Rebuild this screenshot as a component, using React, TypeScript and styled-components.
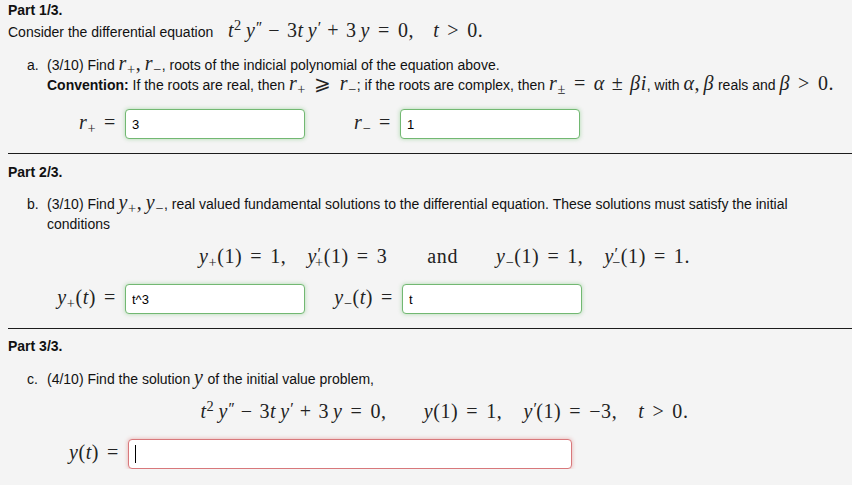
import React from 'react';
import styled, { createGlobalStyle } from 'styled-components';

const Global = createGlobalStyle`
  html, body { margin: 0; padding: 0; background: #f4f4f4; }
  body {
    font-family: "Liberation Sans", Arial, Helvetica, sans-serif;
    font-size: 14px;
    color: #111;
  }
`;

const Page = styled.div`
  padding: 0 0 0 8px;
  line-height: 20px;
`;

const PartTitle = styled.div<{ $mt?: number }>`
  font-weight: bold;
  margin-top: ${(p) => p.$mt ?? 0}px;
`;

const Line = styled.div<{ $mt?: number }>`
  margin-top: ${(p) => p.$mt ?? 0}px;
  white-space: nowrap;
`;

const Rule = styled.div<{ $mt: number }>`
  margin-top: ${(p) => p.$mt}px;
  border-top: 1px solid #1c1c1c;
`;

const Item = styled.div<{ $mt: number }>`
  display: grid;
  grid-template-columns: 20px 1fr;
  padding-left: 19px;
  margin-top: ${(p) => p.$mt}px;
`;

const Marker = styled.span``;

const Body = styled.div`
  padding-right: 10px;
`;

const Bold = styled.b``;

const M = styled.span`
  font-family: "Liberation Serif", "DejaVu Serif", "Times New Roman", serif;
  font-size: 20px;
  letter-spacing: 0.03em;
  line-height: 0;
  color: #222;
  white-space: nowrap;
`;

const I = styled.span`
  font-style: italic;
`;

const Sub = styled.span<{ $under?: boolean }>`
  font-size: 0.72em;
  vertical-align: -0.3em;
  line-height: 0;
  margin-left: ${(p) => (p.$under ? '-0.36em' : '0')};
`;

const Sup = styled.span`
  font-size: 0.72em;
  vertical-align: 0.5em;
  line-height: 0;
`;

const Prime = styled.span`
  font-size: 0.8em;
  vertical-align: 0.28em;
  line-height: 0;
  letter-spacing: -0.05em;
  margin-left: 0.04em;
`;

const Rel = styled.span`
  padding: 0 0.4em;
`;

const Bin = styled.span`
  padding: 0 0.34em;
`;

const Sp = styled.span<{ $em: number }>`
  display: inline-block;
  width: ${(p) => p.$em}em;
`;

const Display = styled.div<{ $mt: number }>`
  margin-top: ${(p) => p.$mt}px;
  text-align: center;
`;

const FieldRow = styled.div<{ $mt: number }>`
  display: flex;
  align-items: center;
  margin-top: ${(p) => p.$mt}px;
`;

const Label = styled.span<{ $w: number }>`
  box-sizing: border-box;
  width: ${(p) => p.$w}px;
  padding-right: 1px;
  text-align: right;
  flex: none;
`;

const FieldWrap = styled.span`
  position: relative;
  display: inline-flex;
  flex: none;
`;

const Field = styled.input<{ $w: number; $bad?: boolean }>`
  box-sizing: border-box;
  width: ${(p) => p.$w}px;
  height: 30px;
  margin: 0;
  padding: 0 6px;
  border: 1px solid ${(p) => (p.$bad ? '#d8787b' : '#72b872')};
  border-radius: 4px;
  background: #fff;
  box-shadow: 0 0 4px ${(p) => (p.$bad ? 'rgba(217, 83, 79, 0.45)' : 'rgba(92, 184, 92, 0.45)')};
  font-family: "Liberation Sans", Arial, sans-serif;
  font-size: 13px;
  color: #000;
  outline: none;
`;

const Caret = styled.span`
  position: absolute;
  left: 7px;
  top: 6px;
  width: 1px;
  height: 18px;
  background: #000;
`;

const rPlus = (
  <>
    <I>r</I>
    <Sub>+</Sub>
  </>
);
const rMinus = (
  <>
    <I>r</I>
    <Sub>−</Sub>
  </>
);

const Ode = () => (
  <>
    <I>t</I>
    <Sup>2</Sup>
    <Sp $em={0.2} />
    <I>y</I>
    <Prime>′′</Prime>
    <Bin>−</Bin>3<I>t</I>
    <Sp $em={0.2} />
    <I>y</I>
    <Prime>′</Prime>
    <Bin>+</Bin>3<Sp $em={0.2} />
    <I>y</I>
    <Rel>=</Rel>0,
  </>
);

export default function App() {
  return (
    <>
      <Global />
      <Page>
        <PartTitle>Part 1/3.</PartTitle>
        <Line $mt={2}>
          Consider the differential equation
          <Sp $em={1.05} />
          <M>
            <Ode />
            <Sp $em={0.95} />
            <I>t</I>
            <Rel>&gt;</Rel>0.
          </M>
        </Line>

        <Item $mt={13}>
          <Marker>a.</Marker>
          <Body>
            <div>
              (3/10) Find{' '}
              <M>
                {rPlus},<Sp $em={0.17} />
                {rMinus}
              </M>
              , roots of the indicial polynomial of the equation above.
            </div>
            <div>
              <Bold>Convention:</Bold> If the roots are real, then{' '}
              <M>
                {rPlus}
                <Rel>⩾</Rel>
                {rMinus}
              </M>
              ; if the roots are complex, then{' '}
              <M>
                <I>r</I>
                <Sub>±</Sub>
                <Rel>=</Rel>
                <I>α</I>
                <Bin>±</Bin>
                <I>βi</I>
              </M>
              , with{' '}
              <M>
                <I>α</I>,<Sp $em={0.17} />
                <I>β</I>
              </M>{' '}
              reals and{' '}
              <M>
                <I>β</I>
                <Rel>&gt;</Rel>0.
              </M>
            </div>
            <FieldRow $mt={14}>
              <Label $w={78}>
                <M>
                  {rPlus}
                  <Rel>=</Rel>
                </M>
              </Label>
              <FieldWrap>
                <Field $w={180} defaultValue="3" readOnly />
              </FieldWrap>
              <Label $w={95}>
                <M>
                  {rMinus}
                  <Rel>=</Rel>
                </M>
              </Label>
              <FieldWrap>
                <Field $w={180} defaultValue="1" readOnly />
              </FieldWrap>
            </FieldRow>
          </Body>
        </Item>

        <Rule $mt={14} />

        <PartTitle $mt={8}>Part 2/3.</PartTitle>
        <Item $mt={12}>
          <Marker>b.</Marker>
          <Body>
            <div>
              (3/10) Find{' '}
              <M>
                <I>y</I>
                <Sub>+</Sub>,<Sp $em={0.17} />
                <I>y</I>
                <Sub>−</Sub>
              </M>
              , real valued fundamental solutions to the differential equation. These solutions must satisfy the
              initial conditions
            </div>
            <Display $mt={14}>
              <M>
                <I>y</I>
                <Sub>+</Sub>(1)<Rel>=</Rel>1,
                <Sp $em={1.05} />
                <I>y</I>
                <Prime>′</Prime>
                <Sub $under>+</Sub>
                (1)<Rel>=</Rel>3
                <Sp $em={2.0} />
                and
                <Sp $em={1.9} />
                <I>y</I>
                <Sub>−</Sub>(1)<Rel>=</Rel>1,
                <Sp $em={1.05} />
                <I>y</I>
                <Prime>′</Prime>
                <Sub $under>−</Sub>
                (1)<Rel>=</Rel>1.
              </M>
            </Display>
            <FieldRow $mt={16}>
              <Label $w={78}>
                <M>
                  <I>y</I>
                  <Sub>+</Sub>(<I>t</I>)<Rel>=</Rel>
                </M>
              </Label>
              <FieldWrap>
                <Field $w={180} defaultValue="t^3" readOnly />
              </FieldWrap>
              <Label $w={97}>
                <M>
                  <I>y</I>
                  <Sub>−</Sub>(<I>t</I>)<Rel>=</Rel>
                </M>
              </Label>
              <FieldWrap>
                <Field $w={180} defaultValue="t" readOnly />
              </FieldWrap>
            </FieldRow>
          </Body>
        </Item>

        <Rule $mt={14} />

        <PartTitle $mt={7}>Part 3/3.</PartTitle>
        <Item $mt={13}>
          <Marker>c.</Marker>
          <Body>
            <div>
              (4/10) Find the solution{' '}
              <M>
                <I>y</I>
              </M>{' '}
              of the initial value problem,
            </div>
            <Display $mt={14}>
              <M>
                <Ode />
                <Sp $em={1.85} />
                <I>y</I>(1)<Rel>=</Rel>1,
                <Sp $em={1.05} />
                <I>y</I>
                <Prime>′</Prime>(1)<Rel>=</Rel>−3,
                <Sp $em={1.05} />
                <I>t</I>
                <Rel>&gt;</Rel>0.
              </M>
            </Display>
            <FieldRow $mt={16}>
              <Label $w={81}>
                <M>
                  <I>y</I>(<I>t</I>)<Rel>=</Rel>
                </M>
              </Label>
              <FieldWrap>
                <Field $w={444} $bad defaultValue="" readOnly />
                <Caret />
              </FieldWrap>
            </FieldRow>
          </Body>
        </Item>
      </Page>
    </>
  );
}
